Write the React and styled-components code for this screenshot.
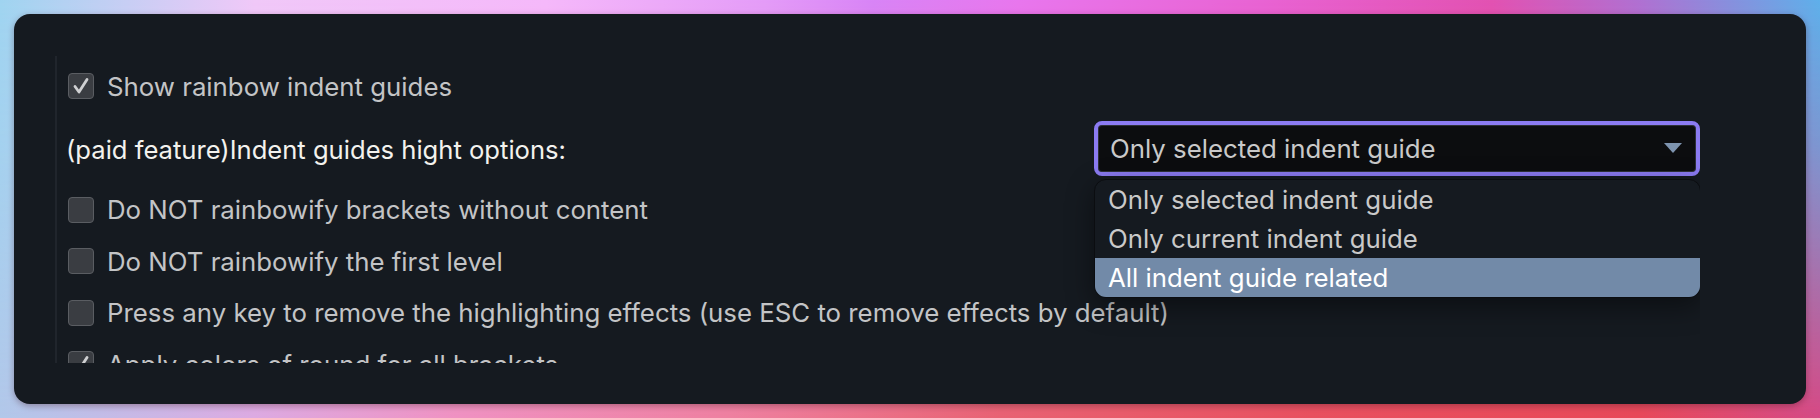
import styled, { createGlobalStyle } from "styled-components";

const GlobalStyle = createGlobalStyle`
body {
    margin: 0;
    font-family: Inter, "Liberation Sans", sans-serif;
}
`

const options = [
    "Only selected indent guide",
    "Only current indent guide",
    "All indent guide related",
];

const rows = [
    { label: "Do NOT rainbowify brackets without content", checked: false },
    { label: "Do NOT rainbowify the first level", checked: false },
    { label: "Press any key to remove the highlighting effects (use ESC to remove effects by default)", checked: false },
    { label: "Apply colors of round for all brackets", checked: true },
];

// small check mark used inside the checked boxes
const Check = () => (
    <svg width="20" height="20" viewBox="0 0 20 20">
        <path d="M4 10.5 L8 16 L16 3.5" fill="none" stroke="#cfd0d2" strokeWidth="2.8" strokeLinecap="round" strokeLinejoin="round" />
    </svg>
);

const CheckOption = ({ label, checked }) => (
    <CheckRow>
        <Box>{checked && <Check />}</Box>
        <RowText>{label}</RowText>
    </CheckRow>
);

const App = () => {
    const selected = 2;

    return(
        <>
        <GlobalStyle />
        <Backdrop>
            <Panel>
                <ScrollArea>
                    <CheckOption label="Show rainbow indent guides" checked />
                    <SettingRow>
                        <Label>(paid feature)Indent guides hight options:</Label>
                        <SelectWrap>
                            <Select>
                                <span>{options[0]}</span>
                                <Arrow />
                            </Select>
                            <Menu>
                                {options.map((opt, i) => (
                                    <MenuItem key={opt} $active={i === selected}>{opt}</MenuItem>
                                ))}
                            </Menu>
                        </SelectWrap>
                    </SettingRow>
                    {rows.map((r) => (
                        <CheckOption key={r.label} label={r.label} checked={r.checked} />
                    ))}
                </ScrollArea>
            </Panel>
        </Backdrop>
        </>
    )
};

const Backdrop = styled.div`
position: relative;
width: 1820px;
height: 418px;
padding: 14px;
box-sizing: border-box;
background: linear-gradient(90deg, #b2c8ea 0%, #dcaae2 14%, #ef92c2 25%, #ee80a0 40%, #e86272 55%, #e8505e 72%, #e84858 90%, #d64a86 100%);
overflow: hidden;

&::before {
    content: "";
    position: absolute;
    inset: 0;
    background: linear-gradient(90deg, #9fd4f0 0%, #f0c8f8 14%, #f5b8fa 30%, #e49cf8 42%, #d884f6 48%, #e876ee 56%, #e862d2 70%, #e252b2 82%, #b070d2 90%, #5eb0ea 100%);
    -webkit-mask-image: linear-gradient(180deg, #000 0%, rgba(0,0,0,0.75) 35%, transparent 100%);
    mask-image: linear-gradient(180deg, #000 0%, rgba(0,0,0,0.75) 35%, transparent 100%);
}
`
const Panel = styled.div`
position: relative;
height: 100%;
box-sizing: border-box;
background: #151a20;
border-radius: 16px;
padding: 42px 106px 0 41px;
box-shadow: 0 2px 6px rgba(60, 20, 30, 0.35);
`
const ScrollArea = styled.div`
height: 307px;
box-sizing: border-box;
border-left: 2px solid #20252c;
padding: 4px 0 0 11px;
overflow: hidden;
`
const CheckRow = styled.div`
display: flex;
align-items: center;
gap: 13px;
height: 51.5px;

&:first-child {
    height: 52px;
}
`
const Box = styled.div`
width: 26px;
height: 26px;
box-sizing: border-box;
flex-shrink: 0;
display: flex;
align-items: center;
justify-content: center;
background: #3a3d42;
border: 1px solid #5a5d62;
border-radius: 4px;
`
const RowText = styled.span`
font-size: 25.8px;
color: #c3c4c6;
white-space: nowrap;
`
const SettingRow = styled.div`
display: flex;
align-items: center;
height: 72px;
`
const Label = styled.span`
flex: 1;
margin-left: -2px;
padding-top: 3px;
font-size: 25.6px;
color: #f3f2ee;
white-space: nowrap;
`
const SelectWrap = styled.div`
position: relative;
width: 606px;
`
const Select = styled.div`
display: flex;
align-items: center;
justify-content: space-between;
height: 55px;
box-sizing: border-box;
padding: 0 14px 0 12px;
background: #0c0d0f;
border: 4px solid #8b7bf2;
border-radius: 8px;
box-shadow: inset 0 0 0 1px #2e3138;
font-size: 25.8px;
color: #c9c9c9;
`
const Arrow = styled.span`
width: 0;
height: 0;
border-left: 9px solid transparent;
border-right: 9px solid transparent;
border-top: 10px solid #7e94af;
`
const Menu = styled.div`
position: absolute;
top: calc(100% + 3px);
left: 0;
width: 607px;
box-sizing: border-box;
background: #151a20;
border: 1px solid #0b0d10;
border-radius: 12px;
overflow: hidden;
box-shadow: 0 8px 28px rgba(0, 0, 0, 0.45);
`
const MenuItem = styled.div`
height: 39px;
display: flex;
align-items: center;
padding-left: 13px;
font-size: 25.8px;
color: ${(p) => (p.$active ? "#ffffff" : "#c9c9c9")};
background: ${(p) => (p.$active ? "#728aa8" : "transparent")};
`

export default App;
